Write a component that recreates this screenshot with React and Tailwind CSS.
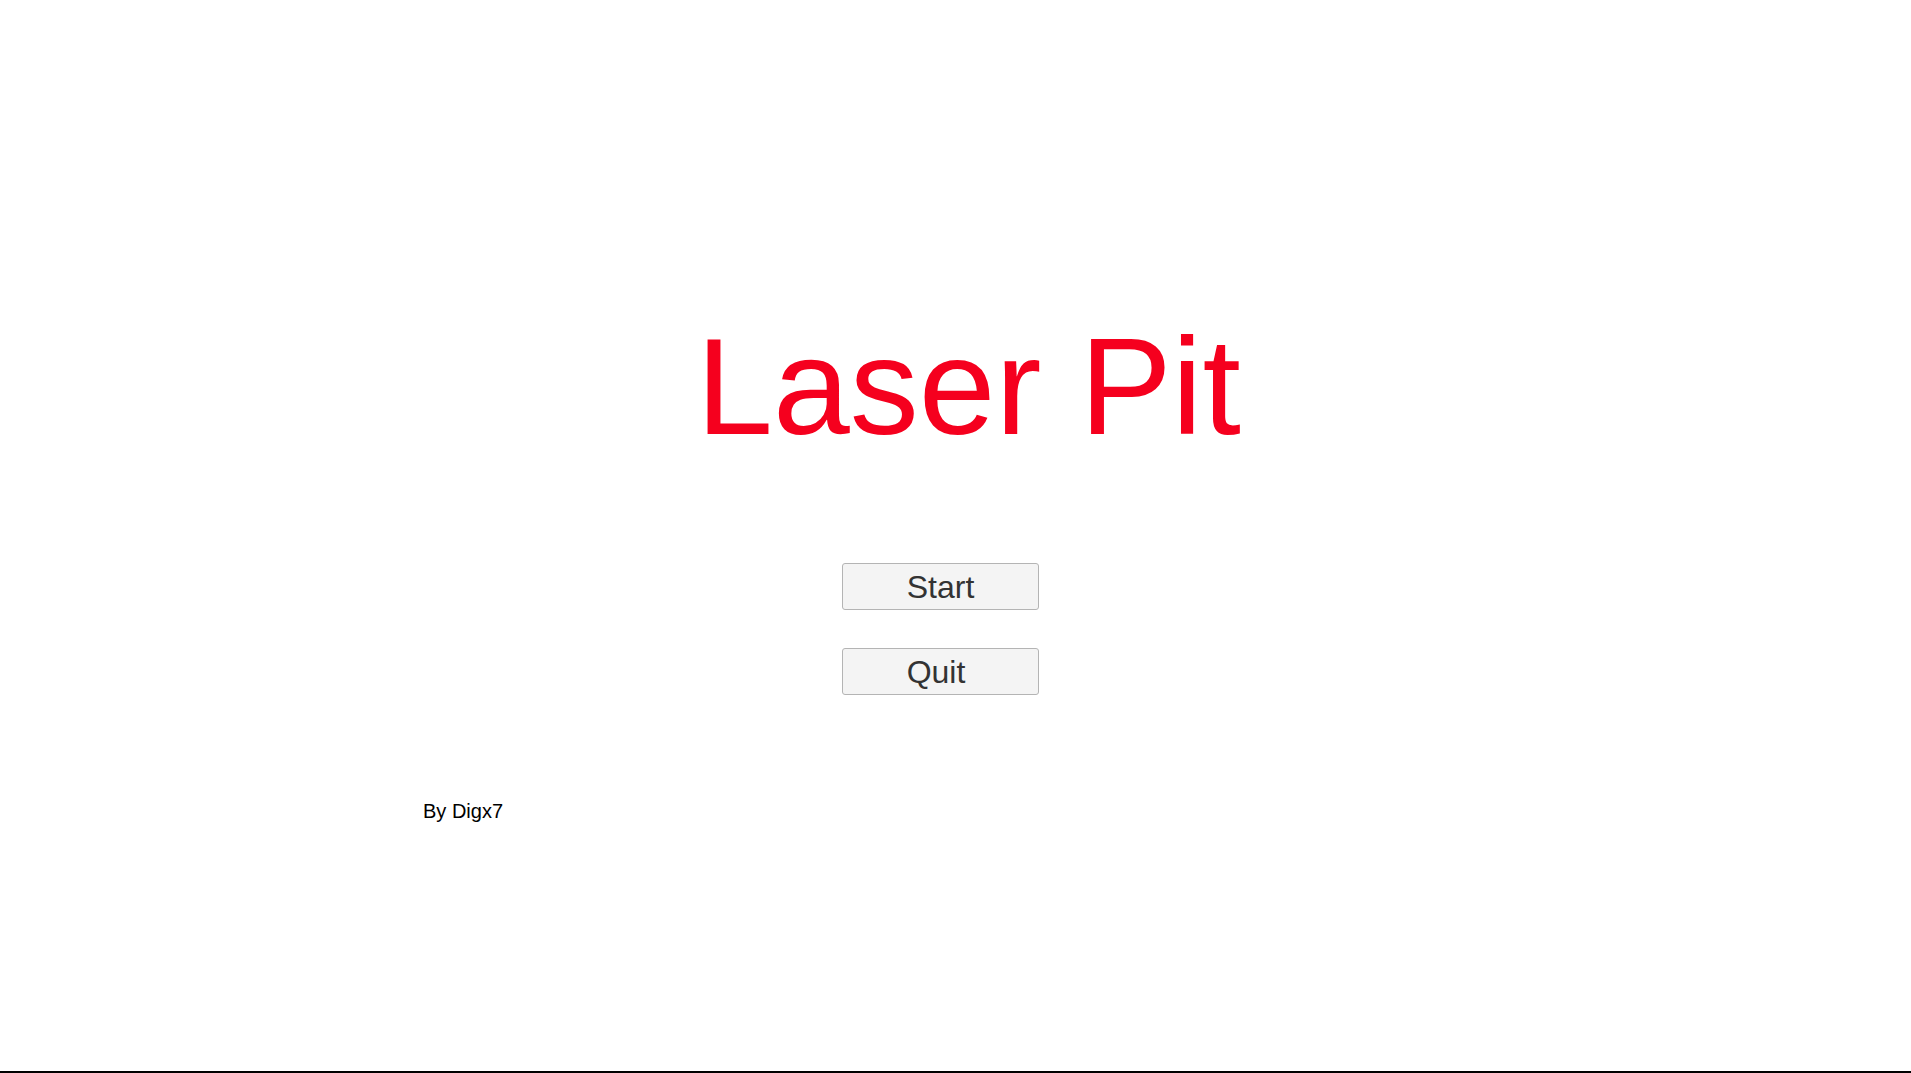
export default function App() {
  return (
    <div className="w-full h-[1073px] flex flex-col bg-white overflow-hidden" style={{ fontFamily: '"Liberation Sans", Arial, sans-serif' }}>
      {/* Title */}
      <h1 className="pt-[317px] pl-[26px] text-center text-[138px] leading-none text-[#f5001e] font-normal">
        Laser Pit
      </h1>

      {/* Menu buttons */}
      <div className="ml-[842px] mt-[108px] flex flex-col gap-[38px]">
        <button className="w-[197px] h-[47px] flex items-center justify-center bg-[#f4f4f4] border border-[#b4b4b4] rounded-[3px] text-[32px] leading-none text-[#333333]">
          Start
        </button>
        <button className="w-[197px] h-[47px] flex items-center justify-center pr-[9px] bg-[#f4f4f4] border border-[#b4b4b4] rounded-[3px] text-[32px] leading-none text-[#333333]">
          Quit
        </button>
      </div>

      <p className="ml-[423px] mt-[106px] text-[20px] leading-none text-black">By Digx7</p>

      <div className="mt-auto h-[2px] bg-black" />
    </div>
  );
}
